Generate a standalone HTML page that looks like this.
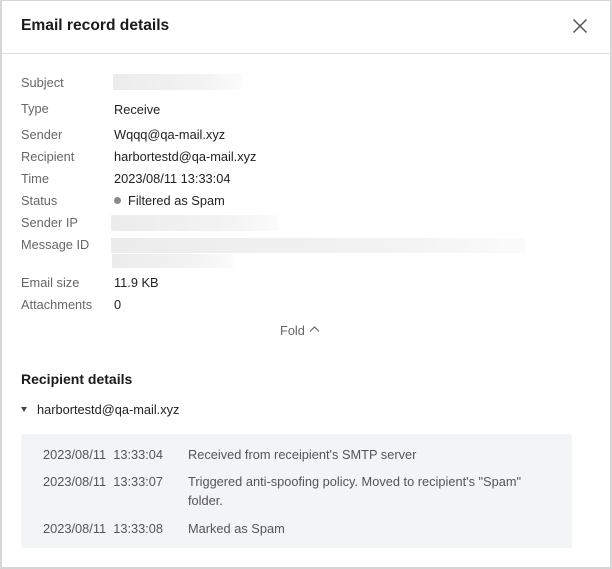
<!DOCTYPE html>
<html><head><meta charset="utf-8"><style>
*{margin:0;padding:0;box-sizing:border-box}
body{width:612px;height:569px;background:#fff;font-family:"Liberation Sans",sans-serif;overflow:hidden;position:relative}
.frame{position:absolute;left:0;top:0;width:612px;height:569px;border:2px solid #d6d6d6;border-top:1px solid #d6d6d6}
.t{position:absolute;white-space:nowrap;line-height:16px}
.l{left:21px;font-size:12.8px;color:#666}
.v{left:114px;font-size:12.8px;color:#222}
.bar{position:absolute;height:16px;background:linear-gradient(90deg,#ececec,#f3f3f3 70%,#fbfbfb)}
.g{font-size:12.8px;color:#555}
</style></head><body>
<div class="frame"></div>
<div class="t" style="left:21px;top:18px;font-size:15.6px;font-weight:bold;color:#1a1a1a">Email record details</div>
<svg style="position:absolute;left:572px;top:18px" width="16" height="16" viewBox="0 0 16 16"><path d="M1.5 1.5L14.5 14.5M14.5 1.5L1.5 14.5" stroke="#555" stroke-width="1.5"/></svg>
<div style="position:absolute;left:2px;right:2px;top:53px;height:1px;background:#ddd"></div>

<div class="t l" style="top:75px">Subject</div><div class="bar" style="left:113px;top:74px;width:129px"></div>
<div class="t l" style="top:101px">Type</div><div class="t v" style="top:102px">Receive</div>
<div class="t l" style="top:127px">Sender</div><div class="t v" style="top:127px">Wqqq@qa-mail.xyz</div>
<div class="t l" style="top:149px">Recipient</div><div class="t v" style="top:149px">harbortestd@qa-mail.xyz</div>
<div class="t l" style="top:171px">Time</div><div class="t v" style="top:171px">2023/08/11 13:33:04</div>
<div class="t l" style="top:193px">Status</div><div style="position:absolute;left:114px;top:197px;width:7px;height:7px;border-radius:50%;background:#8a8a8a"></div><div class="t v" style="top:193px;left:128px">Filtered as Spam</div>
<div class="t l" style="top:215px">Sender IP</div><div class="bar" style="left:111px;top:215px;width:167px"></div>
<div class="t l" style="top:237px">Message ID</div><div class="bar" style="left:111px;top:238px;width:414px;height:15px"></div><div class="bar" style="left:112px;top:254px;width:121px;height:14px"></div>
<div class="t l" style="top:275px">Email size</div><div class="t v" style="top:275px">11.9 KB</div>
<div class="t l" style="top:297px">Attachments</div><div class="t v" style="top:297px">0</div>
<div class="t" style="left:280px;top:323px;font-size:12.8px;color:#666">Fold</div>
<svg style="position:absolute;left:309px;top:325px" width="11" height="8" viewBox="0 0 11 8"><path d="M1 6.5L5.5 2L10 6.5" fill="none" stroke="#666" stroke-width="1.2"/></svg>

<div class="t" style="left:21px;top:371px;font-size:14px;font-weight:bold;color:#1a1a1a">Recipient details</div>
<div style="position:absolute;left:21px;top:407px;width:0;height:0;border-left:3.5px solid transparent;border-right:3.5px solid transparent;border-top:5px solid #444"></div>
<div class="t" style="left:37px;top:402px;font-size:12.8px;color:#222">harbortestd@qa-mail.xyz</div>

<div style="position:absolute;left:21px;top:434px;width:551px;height:114px;background:#f3f4f6;border-radius:3px"></div>
<div class="t g" style="left:43px;top:447px">2023/08/11&nbsp; 13:33:04</div><div class="t g" style="left:188px;top:447px">Received from receipient's SMTP server</div>
<div class="t g" style="left:43px;top:474px">2023/08/11&nbsp; 13:33:07</div><div class="t g" style="left:188px;top:474px">Triggered anti-spoofing policy. Moved to recipient's "Spam"</div>
<div class="t g" style="left:188px;top:493px">folder.</div>
<div class="t g" style="left:43px;top:521px">2023/08/11&nbsp; 13:33:08</div><div class="t g" style="left:188px;top:521px">Marked as Spam</div>
</body></html>
